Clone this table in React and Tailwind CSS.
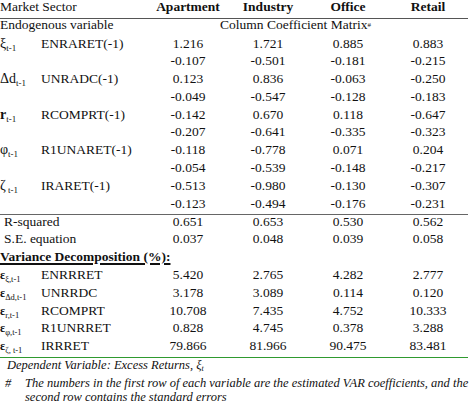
import React from "react";

const cols = "grid grid-cols-[41px_107px_80px_80px_80px_80px] w-[468px]";

const Sub = ({ children }) => (
  <span className="text-[9px] [vertical-align:-3px]">{children}</span>
);

const coefRows = [
  {
    sym: <>ξ<Sub>t-1</Sub></>,
    name: "ENRARET(-1)",
    v: ["1.216", "1.721", "0.885", "0.883"],
    se: ["-0.107", "-0.501", "-0.181", "-0.215"],
  },
  {
    sym: <>Δd<Sub>t-1</Sub></>,
    name: "UNRADC(-1)",
    v: ["0.123", "0.836", "-0.063", "-0.250"],
    se: ["-0.049", "-0.547", "-0.128", "-0.183"],
  },
  {
    sym: <><span className="font-bold">r</span><Sub>t-1</Sub></>,
    name: "RCOMPRT(-1)",
    v: ["-0.142", "0.670", "0.118", "-0.647"],
    se: ["-0.207", "-0.641", "-0.335", "-0.323"],
  },
  {
    sym: <>φ<Sub>t-1</Sub></>,
    name: "R1UNARET(-1)",
    v: ["-0.118", "-0.778", "0.071", "0.204"],
    se: ["-0.054", "-0.539", "-0.148", "-0.217"],
  },
  {
    sym: <>ζ<Sub>&nbsp;t-1</Sub></>,
    name: "IRARET(-1)",
    v: ["-0.513", "-0.980", "-0.130", "-0.307"],
    se: ["-0.123", "-0.494", "-0.176", "-0.231"],
  },
];

const varRows = [
  { sub: "ξ,t-1", name: "ENRRRET", v: ["5.420", "2.765", "4.282", "2.777"] },
  { sub: "Δd,t-1", name: "UNRRDC", v: ["3.178", "3.089", "0.114", "0.120"] },
  { sub: "r,t-1", name: "RCOMPRT", v: ["10.708", "7.435", "4.752", "10.333"] },
  { sub: "φ,t-1", name: "R1UNRRET", v: ["0.828", "4.745", "0.378", "3.288"] },
  { sub: "ζ, t-1", name: "IRRRET", v: ["79.866", "81.966", "90.475", "83.481"] },
];

const Values = ({ v }) =>
  v.map((x, i) => (
    <div key={i} className="text-center">
      {x}
    </div>
  ));

export default function App() {
  return (
    <div className="w-[474px] h-[402px] overflow-hidden bg-white text-[#111] font-['Liberation_Serif',serif] text-[13.5px]">
      {/* header */}
      <div className={`${cols} h-[18.5px] leading-[14px] border-b-[1.5px] border-[#555]`}>
        <div className="col-span-2">Market Sector</div>
        <div className="text-center font-bold">Apartment</div>
        <div className="text-center font-bold">Industry</div>
        <div className="text-center font-bold">Office</div>
        <div className="text-center font-bold">Retail</div>
      </div>

      <div className={`${cols} h-[16px] leading-[12px]`}>
        <div className="col-span-2">Endogenous variable</div>
        <div className="col-span-4 pl-[72px] whitespace-nowrap">
          Column Coefficient Matrix<span className="text-[7px] align-top">#</span>
        </div>
      </div>

      {coefRows.map((r) => (
        <React.Fragment key={r.name}>
          <div className={`${cols} h-[17.8px] leading-[17.8px]`}>
            <div className="text-[14px] whitespace-nowrap">{r.sym}</div>
            <div>{r.name}</div>
            <Values v={r.v} />
          </div>
          <div className={`${cols} h-[17.8px] leading-[17.8px]`}>
            <div />
            <div />
            <Values v={r.se} />
          </div>
        </React.Fragment>
      ))}

      <div className="mt-[2px] w-[468px] border-t-[1.5px] border-[#666]" />

      <div className={`${cols} h-[15px] leading-[13px]`}>
        <div className="col-span-2 pl-[4px]">R-squared</div>
        <Values v={["0.651", "0.653", "0.530", "0.562"]} />
      </div>
      <div className={`${cols} h-[17.8px] leading-[17.8px]`}>
        <div className="col-span-2 pl-[4px]">S.E. equation</div>
        <Values v={["0.037", "0.048", "0.039", "0.058"]} />
      </div>

      <div className="h-[17.8px] leading-[17.8px] font-bold">
        <span className="underline decoration-[1.5px] underline-offset-[2px]">
          Variance Decomposition (%):
        </span>
      </div>

      {varRows.map((r) => (
        <div key={r.name} className={`${cols} h-[17.8px] leading-[17.8px]`}>
          <div className="whitespace-nowrap">
            <span className="font-bold text-[12px]">ε</span>
            <span className="text-[8.5px] [vertical-align:-3px]">{r.sub}</span>
          </div>
          <div>{r.name}</div>
          <Values v={r.v} />
        </div>
      ))}

      <div className="mt-[2px] w-[468px] border-t-[1.5px] border-[#2f9a2f]" />

      {/* notes */}
      <div className="italic text-[12.5px] leading-[14px] whitespace-nowrap">
        <div className="pl-[7px]">
          Dependent Variable: Excess Returns, ξ
          <span className="text-[8px] [vertical-align:-2px]">t</span>
        </div>
        <div className="flex">
          <div className="w-[25px] pl-[5px] shrink-0">#</div>
          <div>
            The numbers in the first row of each variable are the estimated VAR coefficients, and the
            <br />
            second row contains the standard errors
          </div>
        </div>
      </div>
    </div>
  );
}
